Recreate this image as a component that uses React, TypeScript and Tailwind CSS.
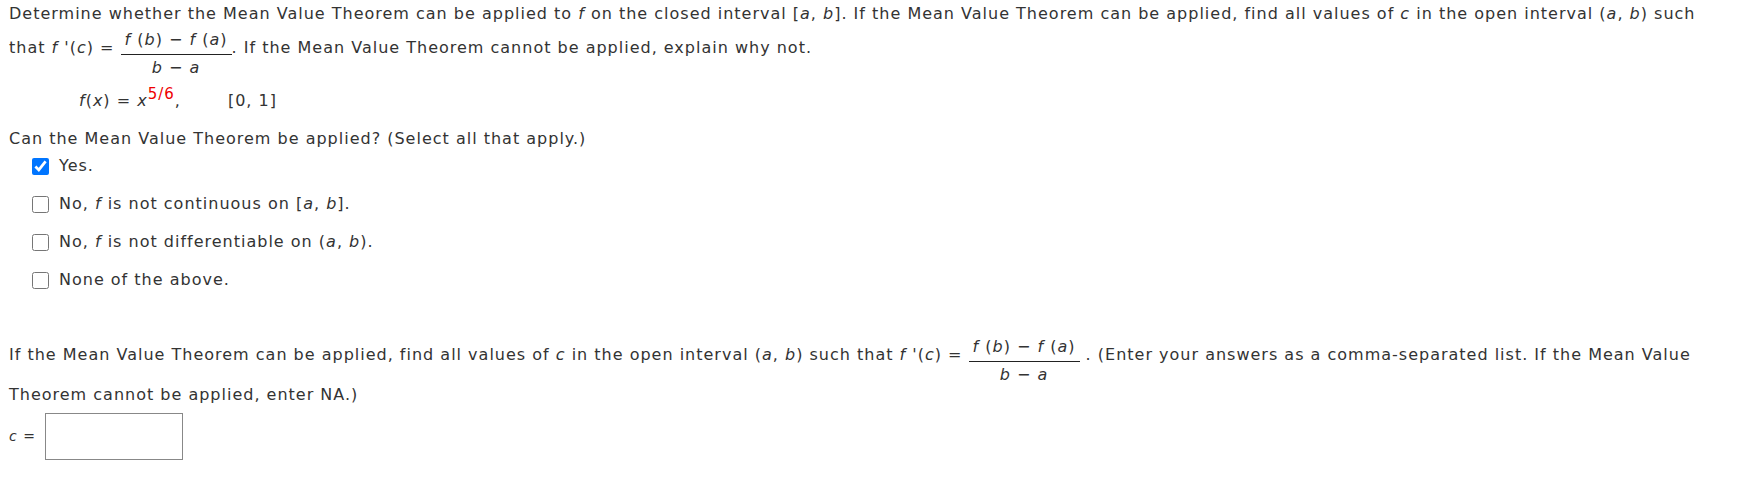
import React from 'react';

const Frac = ({ shift = 'mt-[11px]' }: { shift?: string }) => (
    <span className={`inline-flex flex-col items-center ${shift}`}>
        <span className="px-[4px] leading-[28px]">
            <i>f</i> (<i>b</i>) − <i>f</i> (<i>a</i>)
        </span>
        <span className="w-full border-t border-[#222]" />
        <span className="leading-[26px]">
            <i>b</i> − <i>a</i>
        </span>
    </span>
);

const options = [
    { checked: true, label: <>Yes.</> },
    { checked: false, label: <>No, <i>f</i> is not continuous on [<i>a</i>, <i>b</i>].</> },
    { checked: false, label: <>No, <i>f</i> is not differentiable on (<i>a</i>, <i>b</i>).</> },
    { checked: false, label: <>None of the above.</> },
];

export default function App() {
    return (
        <div className="min-h-[487px] bg-white px-[9px] text-[16px] tracking-[1px] text-[#333] whitespace-nowrap font-['DejaVu_Sans','Liberation_Sans',sans-serif]">
            <div className="h-[28px] leading-[28px]">
                Determine whether the Mean Value Theorem can be applied to <i>f</i> on the closed interval [<i>a</i>, <i>b</i>]. If the Mean Value Theorem can be applied, find all values of <i>c</i> in the open interval (<i>a</i>, <i>b</i>) such
            </div>
            <div className="h-[40px] flex items-center">
                <span>that <i>f</i> '(<i>c</i>) =&nbsp;</span>
                <Frac />
                <span>. If the Mean Value Theorem cannot be applied, explain why not.</span>
            </div>
            <div className="mt-[17px] h-[32px] leading-[32px] pl-[70px]">
                <i>f</i>(<i>x</i>) = <i>x</i>
                <sup className="text-[15px] text-[#e00] relative -top-[7px] align-baseline">5/6</sup>,
                <span className="ml-[47px]">[0, 1]</span>
            </div>
            <div className="mt-[14px] h-[16px] leading-[16px]">
                Can the Mean Value Theorem be applied? (Select all that apply.)
            </div>
            <div className="flex flex-col">
                {options.map((o, i) => (
                    <label key={i} className="h-[38px] flex items-center pl-[23px]">
                        <input
                            type="checkbox"
                            defaultChecked={o.checked}
                            className="m-0 w-[17px] h-[17px] accent-[#0075ff]"
                        />
                        <span className="ml-[10px]">{o.label}</span>
                    </label>
                ))}
            </div>
            <div className="mt-[32px] h-[48px] flex items-center">
                <span>If the Mean Value Theorem can be applied, find all values of <i>c</i> in the open interval (<i>a</i>, <i>b</i>) such that <i>f</i> '(<i>c</i>) =&nbsp;</span>
                <Frac />
                <span>&nbsp;. (Enter your answers as a comma-separated list. If the Mean Value</span>
            </div>
            <div className="mt-[6px] h-[20px] leading-[20px]">
                Theorem cannot be applied, enter NA.)
            </div>
            <div className="mt-[8px] h-[47px] flex items-center">
                <span className="text-[14px]"><i>c</i> =</span>
                <input
                    type="text"
                    className="ml-[9px] w-[138px] h-[47px] border border-[#888] bg-white outline-none"
                />
            </div>
        </div>
    );
}
